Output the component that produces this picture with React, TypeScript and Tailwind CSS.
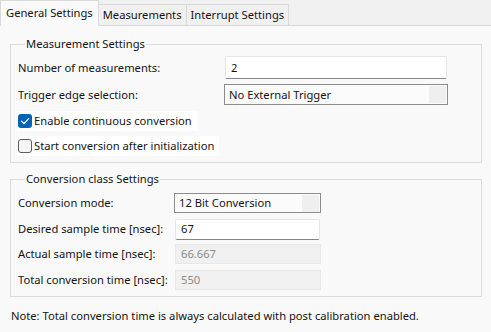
import React from 'react';

const font = { fontFamily: '"Noto Sans", "Open Sans", sans-serif' };

const Tab: React.FC<{ label: string; active?: boolean }> = ({ label, active }) =>
  active ? (
    <div className="relative z-10 -mb-px flex h-[26px] items-center border border-b-0 border-[#d9d9d9] bg-[#f9f9f9] px-[5px] pb-[2px]">
      {label}
    </div>
  ) : (
    <div className="mt-[4px] flex h-[21px] items-center border border-b-0 border-l-0 border-[#d9d9d9] bg-[#f0f0f0] px-[4px]">
      {label}
    </div>
  );

const TextBox: React.FC<{ value: string; className?: string }> = ({ value, className }) => (
  <div className={`flex items-center rounded-[2px] border border-[#e5e5e5] border-b-[#868686] bg-white pl-[5px] ${className ?? ''}`}>
    {value}
  </div>
);

const Combo: React.FC<{ value: string; className?: string }> = ({ value, className }) => (
  <div className={`flex items-center justify-between border border-[#8c8c8c] bg-[#fbfbfb] pl-[4px] pr-px ${className ?? ''}`}>
    <span>{value}</span>
    <div className="h-[17px] w-[17px] bg-[#efefef]" />
  </div>
);

const ReadOnly: React.FC<{ value: string }> = ({ value }) => (
  <div className="flex h-[20px] w-[146px] items-center border border-[#e8e8e8] bg-[#f1f1f1] pl-[5px] text-[#8a8a8a]">
    {value}
  </div>
);

const Row: React.FC<{ label: string; children: React.ReactNode; className?: string }> = ({ label, children, className }) => (
  <div className={`flex items-center ${className ?? ''}`}>
    <div className="w-[156px] shrink-0 whitespace-nowrap">{label}</div>
    {children}
  </div>
);

export default function App() {
  return (
    <div className="flex h-[332px] w-[491px] flex-col whitespace-nowrap bg-[#f0f0f0] text-[11.2px] leading-[16px] text-[#141414]" style={font}>
      <div className="flex h-[25px] items-start">
        <Tab label="General Settings" active />
        <Tab label="Measurements" />
        <Tab label="Interrupt Settings" />
      </div>

      <div className="flex-1 border-t border-[#d9d9d9] bg-[#f9f9f9] pl-[10px] pr-[9px] pt-[10px]">
        <fieldset className="border border-[#dcdcdc] pb-[6px] pl-[7px] pr-[34px]">
          <legend className="ml-[7px] px-[1px]">Measurement Settings</legend>
          <div className="mt-[4px] flex h-[23px] items-center justify-between">
            <span>Number of measurements:</span>
            <TextBox value="2" className="h-[23px] w-[222px]" />
          </div>
          <div className="mt-[5px] flex h-[21px] items-center justify-between">
            <span>Trigger edge selection:</span>
            <Combo value="No External Trigger" className="-mr-px h-[21px] w-[224px]" />
          </div>
          <label className="-ml-px mt-[6px] flex h-[20px] w-fit items-center gap-[2px] bg-white pl-px pr-[6px]">
            <span className="flex h-[14px] w-[14px] items-center justify-center rounded-[3px] bg-[#0063b8]">
              <svg width="10" height="10" viewBox="0 0 10 10" fill="none">
                <path d="M1.5 5.2 L4 7.6 L8.6 2.6" stroke="white" strokeWidth="1.3" strokeLinecap="round" strokeLinejoin="round" />
              </svg>
            </span>
            Enable continuous conversion
          </label>
          <label className="-ml-px mt-[5px] flex h-[20px] w-fit items-center gap-[2px] bg-white pl-px pr-[5px]">
            <span className="h-[14px] w-[14px] rounded-[3px] border border-[#5d5d5d] bg-[#f5f5f5]" />
            Start conversion after initialization
          </label>
        </fieldset>

        <fieldset className="mt-[8px] border border-[#dcdcdc] pb-[6px] pl-[7px]">
          <legend className="ml-[7px] px-[1px]">Conversion class Settings</legend>
          <Row label="Conversion mode:" className="mt-[6px] h-[20px]">
            <Combo value="12 Bit Conversion" className="h-[20px] w-[147px]" />
          </Row>
          <Row label="Desired sample time [nsec]:" className="mt-[6px] h-[20px]">
            <TextBox value="67" className="ml-px h-[21px] w-[145px]" />
          </Row>
          <Row label="Actual sample time [nsec]:" className="mt-[5px] h-[20px]">
            <div className="ml-px"><ReadOnly value="66.667" /></div>
          </Row>
          <Row label="Total conversion time [nsec]:" className="mt-[6px] h-[20px]">
            <div className="ml-px"><ReadOnly value="550" /></div>
          </Row>
        </fieldset>

        <p className="ml-px mt-[11px]">Note: Total conversion time is always calculated with post calibration enabled.</p>
      </div>
    </div>
  );
}
